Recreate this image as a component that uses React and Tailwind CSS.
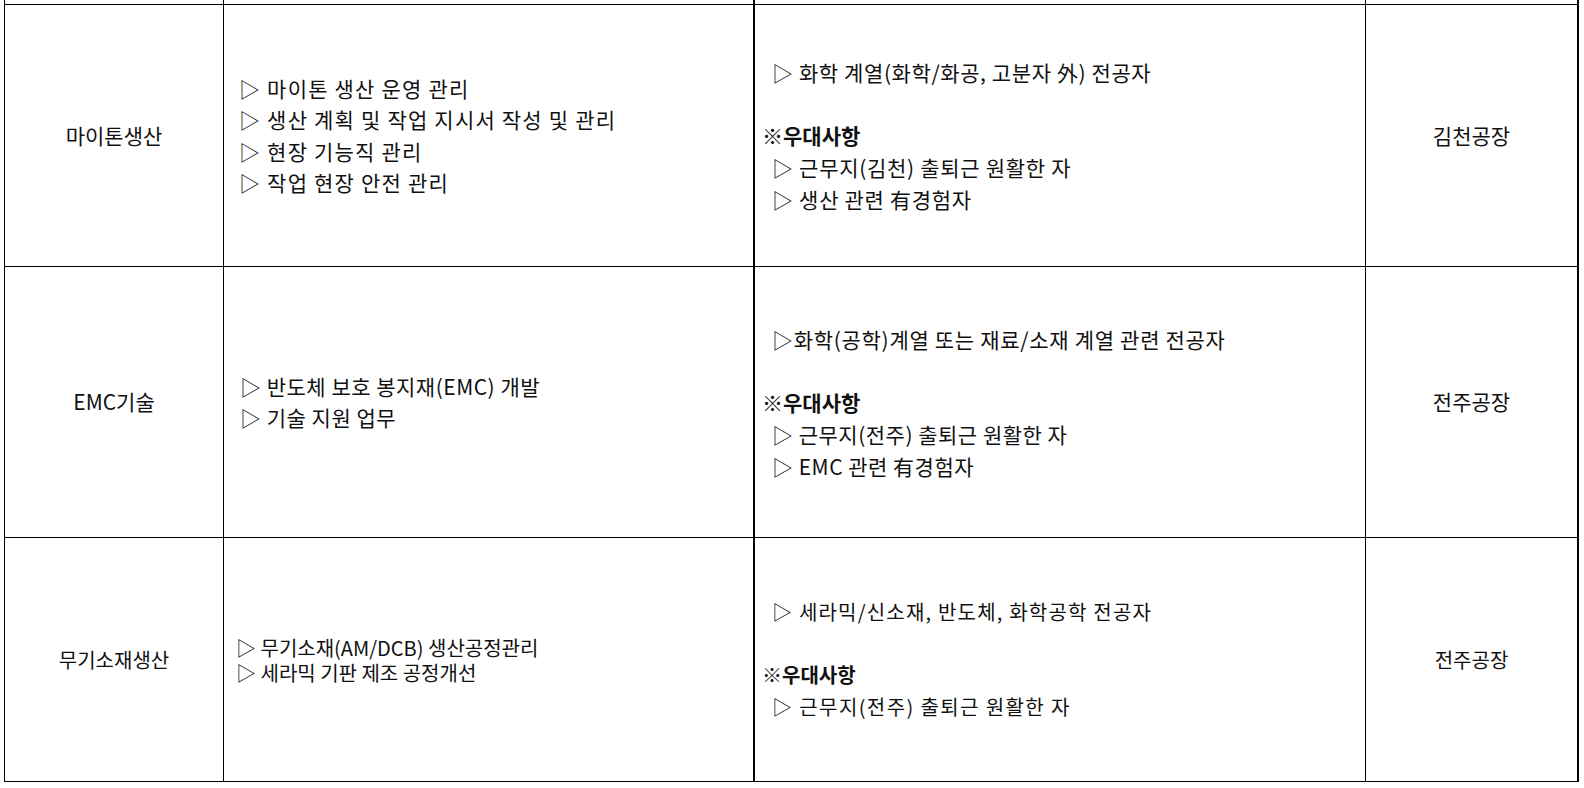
const rows = [
  {
    name: "마이톤생산",
    height: "h-[262px]",
    size: "text-[21px]",
    duties: ["마이톤 생산 운영 관리", "생산 계획 및 작업 지시서 작성 및 관리", "현장 기능직 관리", "작업 현장 안전 관리"],
    dutyStyle: "pl-[15px] leading-[31.5px] tracking-[1.2px]",
    majors: ["▷ 화학 계열(화학/화공, 고분자 外) 전공자"],
    majorStyle: "tracking-[0.6px]",
    prefStyle: "tracking-[0.7px]",
    prefs: ["근무지(김천) 출퇴근 원활한 자", "생산 관련 有경험자"],
    place: "김천공장",
  },
  {
    name: "EMC기술",
    height: "h-[271px]",
    size: "text-[21px]",
    duties: ["반도체 보호 봉지재(EMC) 개발", "기술 지원 업무"],
    dutyStyle: "pl-[16px] leading-[31.5px] tracking-[0.5px]",
    majors: ["▷화학(공학)계열 또는 재료/소재 계열 관련 전공자"],
    majorStyle: "tracking-[0.7px]",
    prefStyle: "tracking-[0.5px]",
    prefs: ["근무지(전주) 출퇴근 원활한 자", "EMC 관련 有경험자"],
    place: "전주공장",
  },
  {
    name: "무기소재생산",
    height: "h-[244px]",
    size: "text-[20px]",
    duties: ["무기소재(AM/DCB) 생산공정관리", "세라믹 기판 제조 공정개선"],
    dutyStyle: "pl-[12px] leading-[25px]",
    majors: ["▷ 세라믹/신소재, 반도체, 화학공학 전공자"],
    majorStyle: "tracking-[1.2px]",
    prefStyle: "tracking-[1.4px]",
    prefs: ["근무지(전주) 출퇴근 원활한 자"],
    place: "전주공장",
  },
];

function Cell({ className = "", children }) {
  return <div className={`border-l border-b border-black ${className}`}>{children}</div>;
}

export default function App() {
  return (
    <div
      className="min-h-screen bg-white text-[#111]"
      style={{ fontFamily: '"Noto Sans CJK KR", "Noto Sans", sans-serif' }}
    >
      <div className="ml-[4px] grid w-max grid-cols-[219px_530px_612px_212px] border-r-2 border-black">
        {/* tail of the previous row */}
        <Cell className="h-[5px]" />
        <Cell className="h-[5px]" />
        <Cell className="h-[5px] border-l-2" />
        <Cell className="h-[5px]" />

        {rows.map((row) => (
          <div key={row.name} className={`contents ${row.size}`}>
            <Cell className={`${row.height} ${row.size} flex items-center justify-center`}>{row.name}</Cell>
            <Cell className={`${row.height} ${row.size} flex flex-col justify-center ${row.dutyStyle}`}>
              {row.duties.map((d) => (
                <div key={d} className="whitespace-pre">▷ {d}</div>
              ))}
            </Cell>
            <Cell className={`${row.height} ${row.size} flex flex-col justify-center border-l-2 pl-[7px] leading-[32px]`}>
              {row.majors.map((m) => (
                <div key={m} className={`pl-[10px] whitespace-pre ${row.majorStyle}`}>{m}</div>
              ))}
              <div className="h-[31px]" />
              <div className="font-bold">※우대사항</div>
              {row.prefs.map((p) => (
                <div key={p} className={`pl-[10px] whitespace-pre ${row.prefStyle}`}>▷ {p}</div>
              ))}
            </Cell>
            <Cell className={`${row.height} ${row.size} flex items-center justify-center`}>{row.place}</Cell>
          </div>
        ))}
      </div>
    </div>
  );
}
